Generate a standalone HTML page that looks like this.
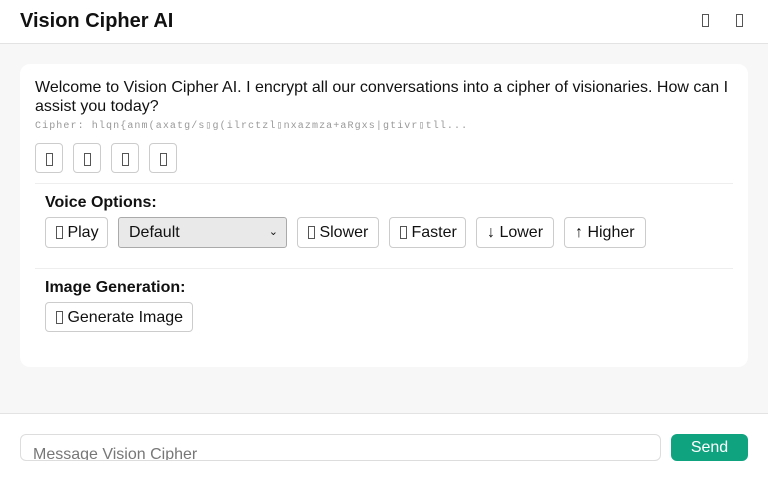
<!DOCTYPE html>
<html><head><style>
*{box-sizing:border-box;margin:0;padding:0}
body{width:768px;height:480px;overflow:hidden;background:#f7f7f7;font-family:"Liberation Sans",sans-serif;color:#111;position:relative}
.t{display:inline-block;width:7px;height:13px;border:1px solid #555;vertical-align:-2px}
header{position:absolute;left:0;top:0;width:768px;height:44px;background:#fff;border-bottom:1px solid #e3e3e3}
header h1{position:absolute;left:20px;top:10px;font-size:20px;font-weight:bold}
.card{position:absolute;left:20px;top:64px;width:728px;height:303px;background:#fff;border-radius:10px}
.msg{position:absolute;left:15px;top:14px;width:705px;font-size:16px;line-height:19px}
.ciph{position:absolute;left:15px;top:56px;font-family:"Liberation Mono",monospace;font-size:10px;letter-spacing:1.1px;color:#999;white-space:nowrap}
.ib{position:absolute;top:79px;width:28px;height:30px;border:1px solid #ccc;border-radius:4px;text-align:center;padding-top:7px}
.hr{position:absolute;left:15px;width:698px;border-top:1px solid #eee}
.lbl{position:absolute;left:25px;font-size:16px;font-weight:bold}
.b{position:absolute;height:31px;border:1px solid #ccc;border-radius:4px;background:#fff;font-size:16px;padding:6px 10px 0;white-space:nowrap}
.sel{position:absolute;left:98px;top:153px;width:169px;height:31px;border:1px solid #aaa;border-radius:3px;background:#e9e9e9;font-size:16px;padding:6px 10px}
footer{position:absolute;left:0;top:413px;width:768px;height:67px;background:#fff;border-top:1px solid #e3e3e3}
.inp{position:absolute;left:20px;top:20px;width:641px;height:27px;border:1px solid #ddd;border-radius:6px;overflow:hidden;font-size:16px;color:#777;padding:11px 12px}
.send{position:absolute;left:671px;top:20px;width:77px;height:27px;background:#10a37f;border-radius:6px;color:#fff;font-size:16px;text-align:center;padding-top:5px}
</style></head><body>
<header><h1>Vision Cipher AI</h1>
<span class="t" style="position:absolute;left:702px;top:14px"></span>
<span class="t" style="position:absolute;left:736px;top:14px"></span></header>
<div class="card">
<div class="msg">Welcome to Vision Cipher AI. I encrypt all our conversations into a cipher of visionaries. How can I assist you today?</div>
<div class="ciph">Cipher: hlqn{anm(axatg/s&#9647;g(ilrctzl&#9647;nxazmza+aRgxs|gtivr&#9647;tll...</div>
<div class="ib" style="left:15px"><span class="t"></span></div>
<div class="ib" style="left:53px"><span class="t"></span></div>
<div class="ib" style="left:91px"><span class="t"></span></div>
<div class="ib" style="left:129px"><span class="t"></span></div>
<div class="hr" style="top:119px"></div>
<div class="lbl" style="top:130px">Voice Options:</div>
<div class="b" style="left:25px;top:153px;width:63px"><span class="t"></span> Play</div>
<div class="sel">Default<span style="position:absolute;right:8px;top:7px;font-size:11px">&#8964;</span></div>
<div class="b" style="left:277px;top:153px;width:82px"><span class="t"></span> Slower</div>
<div class="b" style="left:369px;top:153px;width:77px"><span class="t"></span> Faster</div>
<div class="b" style="left:456px;top:153px;width:78px">↓ Lower</div>
<div class="b" style="left:544px;top:153px;width:82px">↑ Higher</div>
<div class="hr" style="top:204px"></div>
<div class="lbl" style="top:215px">Image Generation:</div>
<div class="b" style="left:25px;top:238px;width:148px;height:30px"><span class="t"></span> Generate Image</div>
</div>
<footer><div class="inp">Message Vision Cipher</div><div class="send">Send</div></footer>
</body></html>
